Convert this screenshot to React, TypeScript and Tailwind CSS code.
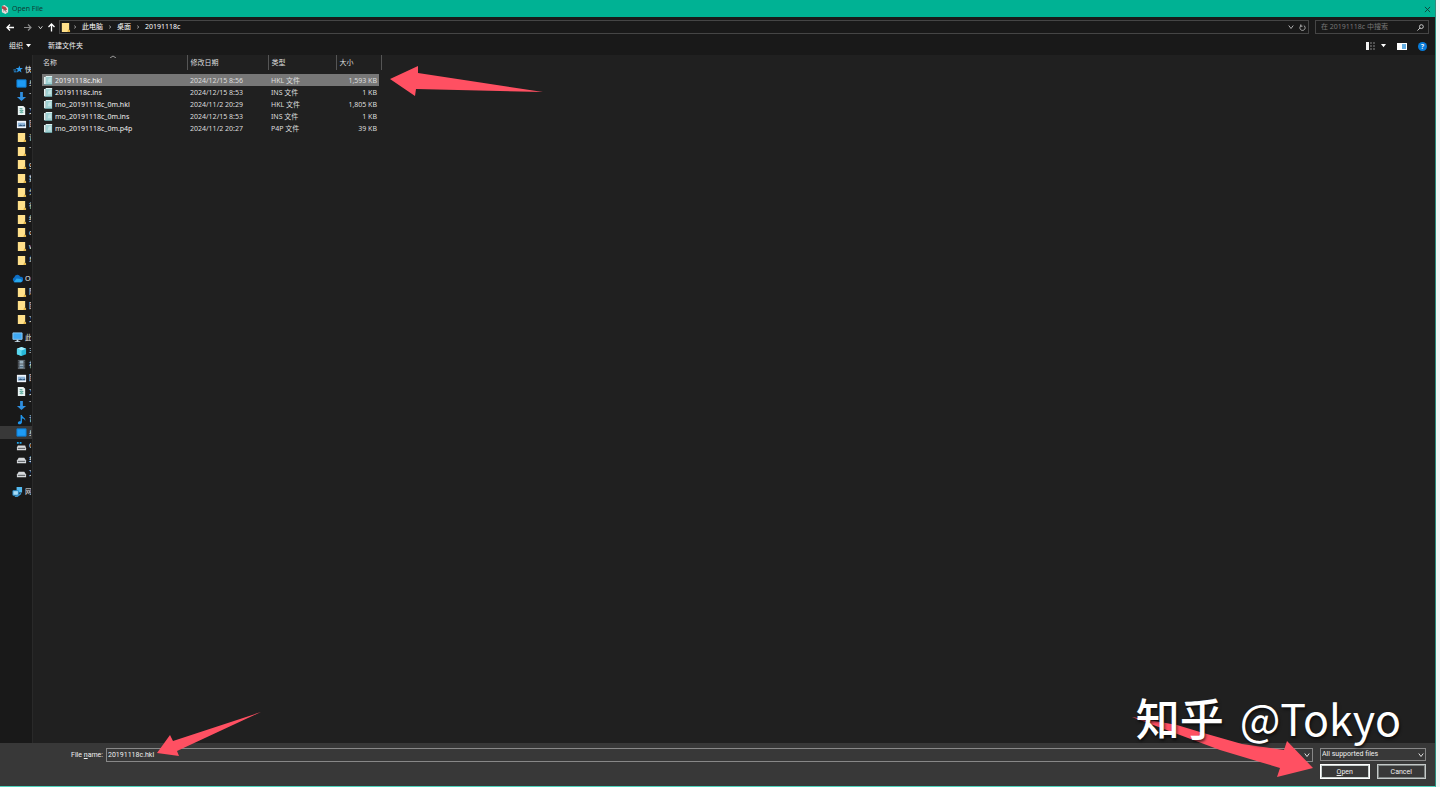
import type { ReactNode } from "react";

const SANS = "font-['Noto_Sans','Noto_Sans_CJK_SC',sans-serif]";

type IconName =
  | "star" | "desktop" | "down" | "doc" | "picture" | "folder" | "cloud"
  | "pc" | "cube" | "video" | "music" | "system" | "drive" | "network";

const glyphs: Record<IconName, ReactNode> = {
  star: <><path d="M8 1.500l.9 2.800 3 .1-2.400 1.900.9 3L8 7.500 5.300 9.300l1-3L4 4.400l3-.1z" fill="#2a9df4" /><path d="M1.500 6.500h3M2 8.500h3" stroke="#2a9df4" /></>,
  desktop: <path d="M1 2h10v8H1z" fill="#1e9bf5" stroke="#0d7bd0" />,
  down: <path d="M4.500 1h3v5.500H11L6 11 1 6.500h3.500z" fill="#2f8fe0" />,
  doc: <><path d="M2 1h6l2 2v8H2z" fill="#e9f2f2" /><path d="M4 4h3M4 6h4M4 8h4" stroke="#4a9a8c" /><path d="M5 5h2v4H5z" fill="#71b9aa" /></>,
  picture: <><path d="M1 2h10v8H1z" fill="#eef4fb" /><path d="M2 4h8v4H2z" fill="#8eb4d8" /><path d="M2 8l3-2 2 1 3-1v2z" fill="#2e557c" /></>,
  folder: <><path d="M2 1h8v8l1 2H2z" fill="#ffe08a" /><path d="M9 8l2 1v2H8z" fill="#e3b64a" /></>,
  cloud: <><path d="M3 10a3 3 0 0 1-.5-5.500 3.500 3.500 0 0 1 6.500-.500A3 3 0 0 1 9.500 10z" fill="#0f6fc5" /><path d="M2 10l3-4 4.500.5a2 2 0 0 1 .5 3.500z" fill="#28a8ea" /></>,
  pc: <><path d="M1 1h10v7H1z" fill="#3fa9f5" stroke="#8fcaf2" /><path d="M5 8.500h2v1.500h2v1H3v-1h2z" fill="#c7dce9" /></>,
  cube: <><path d="M6 1l5 2v6l-5 2-5-2V3z" fill="#27b7d8" /><path d="M1 3l5 2 5-2-5-2z" fill="#a7efff" /><path d="M1 3l5 2v6L1 9z" fill="#5bd7ee" /></>,
  video: <><path d="M2 1h8v10H2z" fill="#5d646b" /><path d="M3 2v8M9 2v8" stroke="#202328" strokeDasharray="1 1" /><path d="M4 2h4v3H4zm0 4h4v4H4z" fill="#9ab0c0" /><path d="M4 8h4v1H4z" fill="#31506a" /></>,
  music: <path d="M5 1h1.500c0 2.500 4.500 3 3.500 6.500-.500-2-2-2.500-3.500-2.500V9c0 2.500-4.500 3-4.500.8C2 8 4 7.500 5 8z" fill="#2196ee" />,
  system: <><path d="M1 1h2v2H1zm3 0h2v2H4z" fill="#21a7ef" /><path d="M2 5h8l1 3v2H1V7z" fill="#d6d9dc" /><path d="M2 8h8" stroke="#474b4f" /></>,
  drive: <><path d="M3 4h6l2 3v3H1V7z" fill="#d6d9dc" /><path d="M2 8h8" stroke="#474b4f" /></>,
  network: <><path d="M5 0h6v6H5z" fill="#53b9ef" /><path d="M1 4h6v5H1z" fill="#a6dcf7" stroke="#2588c4" /><path d="M7 8l3-2v2L6 11H3v-1z" fill="#3a91c7" /></>,
};

function Glyph({ name }: { name: IconName }) {
  return <svg viewBox="0 0 12 12" className="size-[11px] shrink-0" aria-hidden="true">{glyphs[name]}</svg>;
}

type Place = { icon: IconName; label: string; root?: boolean; active?: boolean };

const groups: { height: string; places: Place[] }[] = [
  {
    height: "h-[204px]",
    places: [
      { icon: "star", label: "快速访问", root: true },
      { icon: "desktop", label: "桌面" },
      { icon: "down", label: "下载" },
      { icon: "doc", label: "文档" },
      { icon: "picture", label: "图片" },
      { icon: "folder", label: "论文" },
      { icon: "folder", label: "下载" },
      { icon: "folder", label: "gaussian" },
      { icon: "folder", label: "数据" },
      { icon: "folder", label: "分析" },
      { icon: "folder", label: "待处理" },
      { icon: "folder", label: "结果" },
      { icon: "folder", label: "cif" },
      { icon: "folder", label: "work" },
      { icon: "folder", label: "单晶" },
    ],
  },
  {
    height: "h-[54px]",
    places: [
      { icon: "cloud", label: "OneDrive", root: true },
      { icon: "folder", label: "附件" },
      { icon: "folder", label: "图片" },
      { icon: "folder", label: "文档" },
    ],
  },
  {
    height: "h-[149px]",
    places: [
      { icon: "pc", label: "此电脑", root: true },
      { icon: "cube", label: "3D 对象" },
      { icon: "video", label: "视频" },
      { icon: "picture", label: "图片" },
      { icon: "doc", label: "文档" },
      { icon: "down", label: "下载" },
      { icon: "music", label: "音乐" },
      { icon: "desktop", label: "桌面", active: true },
      { icon: "system", label: "C:" },
      { icon: "drive", label: "软件" },
      { icon: "drive", label: "文档" },
    ],
  },
  { height: "h-[14px]", places: [{ icon: "network", label: "网络", root: true }] },
];

const files = [
  ["20191118c.hkl", "2024/12/15 8:56", "HKL 文件", "1,593 KB"],
  ["20191118c.ins", "2024/12/15 8:53", "INS 文件", "1 KB"],
  ["mo_20191118c_0m.hkl", "2024/11/2 20:29", "HKL 文件", "1,805 KB"],
  ["mo_20191118c_0m.ins", "2024/12/15 8:53", "INS 文件", "1 KB"],
  ["mo_20191118c_0m.p4p", "2024/11/2 20:27", "P4P 文件", "39 KB"],
];

function Chevron({ className = "size-[6px]" }: { className?: string }) {
  return (
    <svg viewBox="0 0 8 8" className={`shrink-0 ${className}`} fill="none" stroke="currentColor" strokeWidth="1.200" aria-hidden="true">
      <path d="M1 2l3 4 3-4" />
    </svg>
  );
}

function Arrow({ d, box, className }: { d: string; box: string; className: string }) {
  return (
    <svg viewBox={box} className={`pointer-events-none absolute ${className}`} aria-hidden="true">
      <path d={d} fill="#ff5062" />
    </svg>
  );
}

function Nav() {
  const icon = "size-[9px]";
  const crumb = "size-[4px] -rotate-90 text-[#c8c8c8]";
  return (
    <header>
      <div className="flex h-[17px] items-center bg-[#00b294] pt-px pr-[4px] pl-px text-[7px] text-[#103d35]">
        <svg viewBox="0 0 9 10" className="mr-[3px] h-[9px] w-[8px]" aria-hidden="true">
          <path d="M1 1l3-1 4 3v5L5 10 1 8z" fill="#e7dddd" />
          <path d="M1 1l4 1 2 3-2 1-4-2z" fill="#b84648" />
          <path d="M2 4l2 1-1 2M5 6l1 2" fill="none" stroke="#75666b" />
        </svg>
        <h1 className="flex-1">Open File</h1>
        <button aria-label="Close" className="text-[#123c35]">
          <svg viewBox="0 0 8 8" className="size-[7px]" stroke="currentColor"><path d="M1 1l6 6M7 1L1 7" /></svg>
        </button>
      </div>
      <div className="flex h-[20px] items-center bg-[#191919] pr-[6px] pl-[6px] text-white">
        <button aria-label="Back" className="w-[17px]"><svg viewBox="0 0 9 9" className={icon} fill="none" stroke="currentColor" strokeWidth="1.300"><path d="M8 4.500H1M4 1.500l-3 3 3 3" /></svg></button>
        <button aria-label="Forward" className="w-[15px] text-[#8c8c8c]"><svg viewBox="0 0 9 9" className={icon} fill="none" stroke="currentColor" strokeWidth="1.200"><path d="M1 4.500h7M5 1.500l3 3-3 3" /></svg></button>
        <button aria-label="Recent locations" className="w-[9px]"><Chevron className="size-[5px]" /></button>
        <button aria-label="Up" className="w-[12px]"><svg viewBox="0 0 9 9" className={icon} fill="none" stroke="currentColor" strokeWidth="1.300"><path d="M4.500 8.500V1M1.500 4l3-3 3 3" /></svg></button>
        <div className="flex h-[14px] min-w-0 flex-1 items-center border border-[#454545] pr-[2px]">
          <Glyph name="folder" />
          <nav className="ml-[2px] flex flex-1 items-center gap-[5px] text-[7px]" aria-label="Path">
            <Chevron className={crumb} /><a href="#">此电脑</a>
            <Chevron className={crumb} /><a href="#">桌面</a>
            <Chevron className={crumb} /><a href="#">20191118c</a>
          </nav>
          <button aria-label="Show locations" className="mr-[5px] text-[#c0c0c0]"><Chevron /></button>
          <button aria-label="Refresh" className="text-[#c0c0c0]"><svg viewBox="0 0 8 8" className="size-[7px]" fill="none" stroke="currentColor"><path d="M5.500 1.700A3 3 0 1 1 2.500 1.700M2 .500v2h2" /></svg></button>
        </div>
        <label className="ml-[6px] flex h-[14px] w-[114px] items-center border border-[#454545] pr-[4px] pl-[5px]">
          <input aria-label="Search" placeholder="在 20191118c 中搜索" className="min-w-0 flex-1 bg-transparent text-[7px] outline-none placeholder:text-[#777]" />
          <svg viewBox="0 0 8 8" className="size-[7px]" fill="none" stroke="#ddd" aria-hidden="true"><circle cx="5" cy="3" r="2.200" /><path d="M3.500 4.500L.5 7.500" /></svg>
        </label>
      </div>
      <div className="flex h-[18px] items-center bg-[#191919] pr-[8px] pl-[9px] text-[7px]">
        <button className="flex w-[39px] items-center gap-[3px]">组织<svg viewBox="0 0 6 4" className="w-[5px] fill-white"><path d="M0 0h6L3 4z" /></svg></button>
        <button>新建文件夹</button>
        <span className="flex-1" />
        <button aria-label="View" className="flex items-center gap-[5px]">
          <svg viewBox="0 0 10 8" className="h-[8px] w-[10px]"><path d="M0 0h3v8H0z" fill="#f2f2f2" /><path d="M4 1h2M7 1h2M4 4h2M7 4h2M4 7h2M7 7h2" stroke="#888" /></svg>
          <svg viewBox="0 0 6 4" className="w-[5px] fill-white"><path d="M0 0h6L3 4z" /></svg>
        </button>
        <button aria-label="Preview pane" className="ml-[11px]"><svg viewBox="0 0 10 8" className="h-[8px] w-[10px]"><path d="M0 1h10v7H0z" fill="#fff" /><path d="M5 2h4v5H5z" fill="#65aee2" /></svg></button>
        <button aria-label="Help" className="ml-[11px] grid size-[9px] place-items-center rounded-full bg-[#087bd9] text-[7px] leading-none font-bold">?</button>
      </div>
    </header>
  );
}

function FileIcon() {
  return (
    <svg viewBox="0 0 10 10" className="size-[9px] shrink-0" aria-hidden="true">
      <path d="M2 0h7v9H2z" fill="#9fd0d2" />
      <path d="M2 0h7v1H2z" fill="#e8f6f6" />
      <path d="M0 1h2v8H0z" fill="#e3f1f1" />
      <path d="M1 9h8v1H0z" fill="#6a9da0" />
      <path d="M5 3l3-1v5H4z" fill="#c0e2e3" />
    </svg>
  );
}

export default function App() {
  const th = "h-[15px] border-r border-[#555] text-left font-normal text-[#ddd]";
  return (
    <div className={`min-h-screen bg-[#eff4f4] pr-[4px] ${SANS}`}>
      <div className="relative flex min-h-screen flex-col border-r border-b border-r-[#2a8c7c] border-b-[#4fd3bd] bg-[#202020] text-[#f0f0f0]">
        <Nav />
        <div className="flex flex-1">
          <aside className="flex w-[33px] shrink-0 flex-col gap-[5px] overflow-hidden border-r border-[#292929] bg-[#191919] pt-[8px]">
            {groups.map(({ height, places }) => (
              <ul key={height} className={`grid auto-rows-fr ${height}`}>
                {places.map((place, row) => (
                  <li key={row} className={`min-h-0 ${place.active ? "bg-[#383838]" : ""}`}>
                    <a href="#" className={`flex h-full w-[31px] items-center gap-[2px] overflow-hidden text-[7px] leading-[10px] whitespace-nowrap ${place.root ? "pl-[12px]" : "pl-[16px]"}`}>
                      <Glyph name={place.icon} />{place.label}
                    </a>
                  </li>
                ))}
              </ul>
            ))}
          </aside>
          <main className="relative min-w-0 flex-1 pl-[9px]">
            <svg viewBox="0 0 6 3" className="absolute top-0 left-[77px] w-[6px]" fill="none" stroke="#999" aria-hidden="true"><path d="M0 3l3-2 3 2" /></svg>
            <table className="w-[339px] table-fixed border-collapse text-[7px] leading-[11px]">
              <colgroup><col className="w-[145px]" /><col className="w-[81px]" /><col className="w-[68px]" /><col className="w-[43px]" /><col className="w-[2px]" /></colgroup>
              <thead>
                <tr>
                  <th className={`${th} pl-px`}>名称</th>
                  <th className={`${th} pl-[3px]`}>修改日期</th>
                  <th className={`${th} pl-[3px]`}>类型</th>
                  <th colSpan={2} className={`${th} pl-[3px]`}>大小</th>
                </tr>
                <tr className="h-[4px]" />
              </thead>
              <tbody>
                {files.map(([name, date, type, size], i) => (
                  <tr key={name} className={`h-[12px] ${i === 0 ? "[&>td]:bg-[#777]" : ""}`}>
                    <td><span className="flex items-center gap-[2px] pl-[2px]"><FileIcon />{name}</span></td>
                    <td className="pl-[3px] text-[#ddd]">{date}</td>
                    <td className="pl-[3px] text-[#ddd]">{type}</td>
                    <td className="pr-[2px] text-right whitespace-nowrap text-[#ddd]">{size}</td>
                  </tr>
                ))}
              </tbody>
            </table>
            <Arrow box="0 0 154 32" className="top-[11px] left-[357px] h-[32px] w-[154px]" d="M0 13L28 0v7l125 19-127-3-1 7z" />
          </main>
        </div>
        <footer className="flex h-[43px] items-start bg-[#383838] pt-[5px] pr-[9px] font-[Roboto,sans-serif] text-[7px]">
          <label htmlFor="filename" className="w-[106px] pt-[2px] pr-[3px] text-right">File <u>n</u>ame:</label>
          <div className="flex h-[14px] flex-1 items-center border border-[#888] pr-[2px]">
            <input id="filename" defaultValue="20191118c.hkl" className="min-w-0 flex-1 bg-transparent px-px outline-none" />
            <Chevron />
          </div>
          <div className="ml-[7px] w-[106px]">
            <div className="relative flex items-center">
              <select aria-label="File type" className="h-[13px] w-full appearance-none border border-[#888] bg-[#383838] pl-px"><option>All supported files</option></select>
              <Chevron className="pointer-events-none absolute right-[2px] size-[6px]" />
            </div>
            <div className="mt-[3px] flex gap-[7px]">
              <button className="h-[15px] flex-1 border border-white leading-[12px] outline outline-[#c8d0ce] -outline-offset-2"><u>O</u>pen</button>
              <button className="h-[15px] flex-1 border border-[#c4c9c8] leading-[12px] outline outline-[#7d8281] -outline-offset-2">Cancel</button>
            </div>
          </div>
        </footer>
        <Arrow box="0 0 105 46" className="bottom-[28px] left-[157px] h-[46px] w-[105px]" d="M0 41L13 23l3 6L104 0 20 39l2 5z" />
        <Arrow box="0 0 182 62" className="right-[121px] bottom-[8px] h-[62px] w-[182px]" d="M0 1L45 9l23 7 42 12 42 6 3-9 26 27-36 9 3-9-60-18z" />
        <p className="pointer-events-none absolute right-[34px] bottom-[39px] flex items-baseline gap-[16px] font-['Noto_Sans_CJK_SC',sans-serif] text-[44px] leading-[60px] whitespace-nowrap text-white [text-shadow:1px_2px_3px_#000a]">
          <span className="font-medium">知乎</span>
          <span className="text-[43px]">@Tokyo</span>
        </p>
      </div>
    </div>
  );
}
